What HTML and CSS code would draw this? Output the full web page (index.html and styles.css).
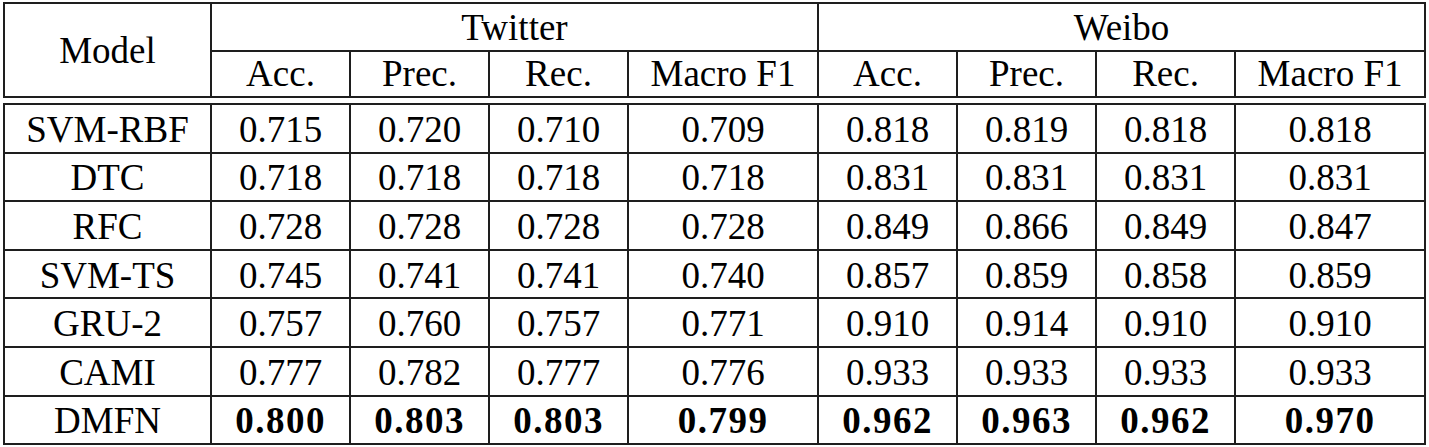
FILE: index.html
```html
<!DOCTYPE html>
<html lang="en">
<head>
  <meta charset="UTF-8" />
  <title>Results</title>
  <link rel="stylesheet" href="styles.css">
</head>
<body>

  <div class="results">
    <table class="grid head">
      <colgroup>
        <col class="c-model"><col class="c-num"><col class="c-num"><col class="c-num"><col class="c-f1">
        <col class="c-num"><col class="c-num"><col class="c-num"><col class="c-f1">
      </colgroup>
      <tr class="row-top">
        <td rowspan="2">Model</td>
        <td colspan="4">Twitter</td>
        <td colspan="4">Weibo</td>
      </tr>
      <tr class="row-sub">
        <td>Acc.</td><td>Prec.</td><td>Rec.</td><td>Macro F1</td>
        <td>Acc.</td><td>Prec.</td><td>Rec.</td><td>Macro F1</td>
      </tr>
    </table>

    <table class="grid body">
      <colgroup>
        <col class="c-model"><col class="c-num"><col class="c-num"><col class="c-num"><col class="c-f1">
        <col class="c-num"><col class="c-num"><col class="c-num"><col class="c-f1">
      </colgroup>
      <tr><td>SVM-RBF</td><td>0.715</td><td>0.720</td><td>0.710</td><td>0.709</td><td>0.818</td><td>0.819</td><td>0.818</td><td>0.818</td></tr>
      <tr><td>DTC</td><td>0.718</td><td>0.718</td><td>0.718</td><td>0.718</td><td>0.831</td><td>0.831</td><td>0.831</td><td>0.831</td></tr>
      <tr><td>RFC</td><td>0.728</td><td>0.728</td><td>0.728</td><td>0.728</td><td>0.849</td><td>0.866</td><td>0.849</td><td>0.847</td></tr>
      <tr><td>SVM-TS</td><td>0.745</td><td>0.741</td><td>0.741</td><td>0.740</td><td>0.857</td><td>0.859</td><td>0.858</td><td>0.859</td></tr>
      <tr><td>GRU-2</td><td>0.757</td><td>0.760</td><td>0.757</td><td>0.771</td><td>0.910</td><td>0.914</td><td>0.910</td><td>0.910</td></tr>
      <tr><td>CAMI</td><td>0.777</td><td>0.782</td><td>0.777</td><td>0.776</td><td>0.933</td><td>0.933</td><td>0.933</td><td>0.933</td></tr>
      <tr class="best"><td>DMFN</td><td>0.800</td><td>0.803</td><td>0.803</td><td>0.799</td><td>0.962</td><td>0.963</td><td>0.962</td><td>0.970</td></tr>
    </table>
  </div>

</body>
</html>
```

FILE: styles.css
```css
body {
  margin: 0;
  background: #fff;
  color: #000;
  font-family: "Liberation Serif", serif;
}

.results {
  padding: 2px 0 0 3px;
  width: 1423px;
}

.grid {
  width: 1423px;
  table-layout: fixed;
  border-collapse: collapse;
  font-family: "Liberation Serif", serif;
  font-size: 37px;
}

.grid td {
  border: 2px solid #1e1e1e;
  padding: 0;
  text-align: center;
  vertical-align: middle;
  line-height: 1;
}

.c-model { width: 207px; }
.c-num   { width: 139px; }
.c-f1    { width: 190px; }

.head .row-top { height: 48px; }
.head .row-sub { height: 46px; }
.head .row-sub td { padding-bottom: 2px; }

.body {
  margin-top: 5px;
}

.body tr { height: 48.6px; }

.body td { padding-top: 2px; }

.best td + td {
  font-weight: bold;
  letter-spacing: 1.5px;
}
```
